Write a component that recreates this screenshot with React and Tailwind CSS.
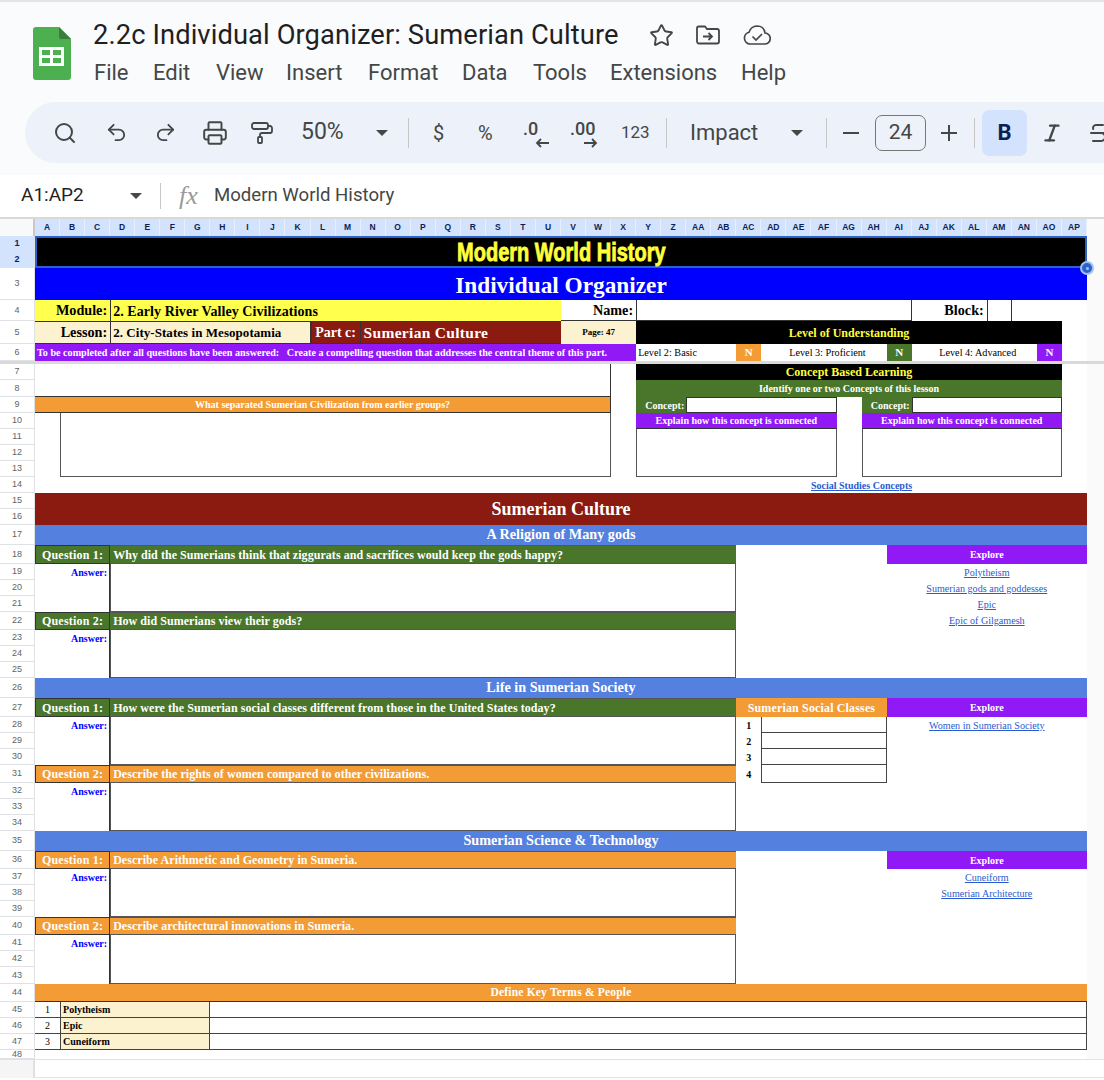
import { Italic, PaintRoller, Printer, Redo2, Search, Star, Strikethrough, Undo2 } from "lucide-react";

const serif = "font-['Liberation_Serif',serif]";
const menu = [
  ["File", "w-[59px]"],
  ["Edit", "w-[63px]"],
  ["View", "w-[70px]"],
  ["Insert", "w-[82px]"],
  ["Format", "w-[94px]"],
  ["Data", "w-[71px]"],
  ["Tools", "w-[77px]"],
  ["Extensions", "w-[131px]"],
  ["Help", "w-[60px]"],
];
const columns = "A B C D E F G H I J K L M N O P Q R S T U V W X Y Z AA AB AC AD AE AF AG AH AI AJ AK AL AM AN AO AP".split(" ");
const frozenRows = [16, 16, 32, 21, 23, 17];
const bodyRows = [16, 17, 16, 16, 16, 16, 16, 16, 16, 16, 20, 19, 16, 16, 16, 18, 16, 16, 16, 20, 19, 16, 16, 16, 18, 16, 16, 16, 20, 18, 16, 16, 16, 18, 16, 16, 17, 18, 16, 16, 16, 9];

function SheetsLogo() {
  return (
    <svg width="38" height="53" viewBox="0 0 38 53" className="mt-[6px] shrink-0">
      <path d="M3 0H26L38 12V50a3 3 0 0 1-3 3H3a3 3 0 0 1-3-3V3a3 3 0 0 1 3-3z" fill="#4caf50" />
      <path d="M26 0L38 12H28a2 2 0 0 1-2-2z" fill="#3b7d3e" />
      <path d="M6 20H31V39H6zM9 23V28H17V23zM20 23V28H28V23zM9 31V36H17V31zM20 31V36H28V31z" fill="#fff" fillRule="evenodd" />
    </svg>
  );
}

function FolderMove() {
  return (
    <svg width="24" height="20" viewBox="0 0 24 20" fill="none" stroke="#444746" strokeWidth="1.8">
      <path d="M1 3a1.500 1.500 0 0 1 1.500-1.500H9l2 2.500h10a2 2 0 0 1 2 2v10.500a2 2 0 0 1-2 2H3a2 2 0 0 1-2-2z" />
      <path d="M7 11.500h9M12.500 8l3.500 3.500-3.500 3.500" />
    </svg>
  );
}

function CloudDone() {
  return (
    <svg width="28" height="20" viewBox="0 0 28 20" fill="none" stroke="#444746" strokeWidth="1.7">
      <path d="M7 19a6 6 0 0 1-1-11.800A9 9 0 0 1 14 1c4.500 0 7.500 3 8 7a5.500 5.500 0 0 1-.5 11z" />
      <path d="M9.500 11.500l3.500 3.500 6-6" />
    </svg>
  );
}

function Caret({ className }) {
  return <span className={`h-0 w-0 border-x-[6px] border-t-[6px] border-x-transparent border-t-[#444746] ${className}`} />;
}

function Sep({ className }) {
  return <span className={`h-[30px] w-px shrink-0 bg-[#c7c7c7] ${className}`} />;
}

function DecimalIcon({ label, reverse, className }) {
  return (
    <span className={`relative h-[30px] shrink-0 text-[#444746] ${className}`}>
      <span className="absolute left-0 top-[-1px] text-[18px] font-medium leading-[24px]">{label}</span>
      <svg width="14" height="10" viewBox="0 0 14 10" className={`absolute bottom-0 right-0 ${reverse ? "rotate-180" : ""}`} fill="none" stroke="#444746" strokeWidth="1.800">
        <path d="M14 5H2M6 1L2 5l4 4" />
      </svg>
    </span>
  );
}

function Chrome() {
  return (
    <div className="h-[173px] shrink-0 bg-[#f9fbfd] font-['Roboto',sans-serif]">
      <div className="flex h-[66px] pl-[33px] pt-[19px]">
        <SheetsLogo />
        <div className="ml-[22px] min-w-0">
          <div className="flex h-[28px] items-center">
            <span className="text-[27.300px] leading-[28px] tracking-[0.1px] text-[#1f1f1f]">2.2c Individual Organizer: Sumerian Culture</span>
            <Star className="ml-[30px] shrink-0 text-[#444746]" size={25} strokeWidth={1.8} />
            <span className="ml-[22px]"><FolderMove /></span>
            <span className="ml-[23px]"><CloudDone /></span>
          </div>
          <div className="ml-px mt-[11px] flex h-[26px] items-center text-[22px] leading-[26px] text-[#444746]">
            {menu.map(([name, width]) => (
              <span key={name} className={`shrink-0 ${width}`}>{name}</span>
            ))}
          </div>
        </div>
      </div>
      <div className="ml-[25px] mt-[34px] flex h-[61px] items-center overflow-hidden rounded-l-full bg-[#edf2fa] text-[#444746]">
        <Search className="ml-[28px] shrink-0" size={24} strokeWidth={2} />
        <Undo2 className="ml-[28px] shrink-0" size={23} strokeWidth={1.9} />
        <Redo2 className="ml-[26px] shrink-0" size={23} strokeWidth={1.9} />
        <Printer className="ml-[25px] shrink-0" size={26} strokeWidth={1.8} />
        <PaintRoller className="ml-[22px] shrink-0" size={24} strokeWidth={1.8} />
        <span className="ml-[27px] w-[47px] shrink-0 text-[23px]">50%</span>
        <Caret className="ml-[28px] shrink-0" />
        <Sep className="ml-[20px]" />
        <span className="ml-[24px] w-[11px] shrink-0 text-[20px]">$</span>
        <span className="ml-[34px] w-[18px] shrink-0 text-[20px]">%</span>
        <DecimalIcon label=".0" className="ml-[27px] w-[26px]" />
        <DecimalIcon label=".00" reverse className="ml-[21px] w-[28px]" />
        <span className="ml-[23px] w-[28px] shrink-0 text-[17px]">123</span>
        <Sep className="ml-[17px]" />
        <span className="ml-[23px] w-[70px] shrink-0 text-[22px]">Impact</span>
        <Caret className="ml-[31px] shrink-0" />
        <Sep className="ml-[23px]" />
        <span className="ml-[16px] h-[2px] w-[16px] shrink-0 bg-[#444746]" />
        <span className="ml-[16px] flex h-[36px] w-[51px] shrink-0 items-center justify-center rounded-[7px] border border-[#747775] text-[21px]">24</span>
        <span className="relative ml-[15px] h-[16px] w-[16px] shrink-0">
          <span className="absolute left-0 top-[7px] h-[2px] w-[16px] bg-[#444746]" />
          <span className="absolute left-[7px] top-0 h-[16px] w-[2px] bg-[#444746]" />
        </span>
        <Sep className="ml-[17px]" />
        <span className="ml-[7px] flex h-[46px] w-[45px] shrink-0 items-center justify-center rounded-[7px] bg-[#d3e3fd] text-[22px] font-bold text-[#0b1f57]">B</span>
        <Italic className="ml-[14px] shrink-0" size={22} strokeWidth={2.600} />
        <Strikethrough className="ml-[24px] shrink-0" size={24} strokeWidth={2} />
      </div>
    </div>
  );
}

function FormulaBar() {
  return (
    <div className="flex h-[44px] shrink-0 items-center border-b-2 border-[#d9d9d9] bg-white pb-px font-['Roboto',sans-serif]">
      <span className="ml-[21px] w-[109px] text-[19px] text-[#1f1f1f]">A1:AP2</span>
      <Caret className="shrink-0" />
      <span className="ml-[18px] h-[26px] w-px bg-[#c7c7c7]" />
      <span className="ml-[18px] w-[35px] font-['Liberation_Serif',serif] text-[26px] italic leading-none text-[#9a9a9a]">fx</span>
      <span className="text-[18.600px] text-[#444746]">Modern World History</span>
    </div>
  );
}

function RowHeader({ rows, start, selected = [] }) {
  return (
    <div className="w-[35px] shrink-0 bg-white">
      {rows.map((height, i) => {
        const num = start + i;
        const active = selected.includes(num);
        return (
          <div
            key={num}
            style={{ height }}
            className={`flex items-center justify-center overflow-hidden border-b border-r border-[#dfe1e5] font-['Liberation_Sans',sans-serif] text-[9px] leading-none ${active ? "bg-[#d3e3fd] font-bold text-[#0b1f57]" : "text-[#5f6368]"}`}
          >
            {num}
          </div>
        );
      })}
    </div>
  );
}

function Question({ row, tone, label, text }) {
  return (
    <>
      <div className={`${row} col-[1/4] flex items-center justify-center border border-[#333] text-[12px] font-bold tracking-[0.2px] text-white ${tone}`}>{label}</div>
      <div className={`${row} col-[4/29] flex items-center border-y border-[#555] pl-[3px] text-[12px] font-bold tracking-[0.05px] text-white ${tone}`}>{text}</div>
    </>
  );
}

function Answer({ row }) {
  return (
    <>
      <div className={`${row} col-[1/4] border-r border-[#333] pr-[2px] text-right text-[10px] font-bold leading-[18px] text-[#0000ff]`}>Answer:</div>
      <div className={`${row} col-[4/29] border-x border-b border-[#555]`} />
    </>
  );
}

function Explore({ row }) {
  return <div className={`${row} col-[35/43] flex items-center justify-center bg-[#9019f5] text-[10px] font-bold text-white`}>Explore</div>;
}

function SheetLink({ row, children }) {
  return <div className={`${row} col-[35/43] text-center text-[10.100px] leading-[18px] text-[#2a5bd0] underline`}>{children}</div>;
}

function Band({ row, className = "bg-[#5480e0] text-[14.200px]", children }) {
  return <div className={`${row} col-[1/43] flex items-center justify-center font-bold text-white ${className}`}>{children}</div>;
}

function FrozenGrid() {
  return (
    <div className={`relative grid w-[1052px] shrink-0 grid-cols-[repeat(42,25.048px)] grid-rows-[16px_16px_32px_21px_23px_17px] bg-white ${serif} text-black`}>
      <div className="col-[1/43] row-[1/3] flex items-center justify-center border-2 border-[#2d62c8] bg-black font-['Liberation_Sans',sans-serif] text-[25px] font-bold leading-none text-[#ffff3a]">
        <span className="inline-block scale-x-[0.8] whitespace-nowrap [-webkit-text-stroke:0.8px_#ffff3a]">Modern World History</span>
      </div>
      <div className="col-[1/43] row-[3] flex items-center justify-center bg-[#0000ff] pt-[2px] text-[23.300px] font-bold text-white">Individual Organizer</div>

      <div className="col-[1/4] row-[4] flex items-center justify-end bg-[#ffff4d] pr-[3px] pt-px text-[14.200px] font-bold">Module:</div>
      <div className="col-[4/22] row-[4] flex items-center border-l border-[#333] bg-[#ffff4d] pl-[2px] pt-px text-[14px] font-bold tracking-[0.07px]">2. Early River Valley Civilizations</div>
      <div className="col-[22/25] row-[4] flex items-center justify-end border-b border-[#333] pr-[3px] pt-px text-[14.200px] font-bold">Name:</div>
      <div className="col-[25/36] row-[4] border-x border-b border-[#333]" />
      <div className="col-[36/39] row-[4] flex items-center justify-end pr-[3px] pt-px text-[14.200px] font-bold">Block:</div>
      <div className="col-[39] row-[4] border-x border-[#333]" />

      <div className="col-[1/4] row-[5] flex items-center justify-end border-y border-[#333] bg-[#fdf2d0] pr-[3px] text-[14.200px] font-bold">Lesson:</div>
      <div className="col-[4/12] row-[5] flex items-center border border-[#333] bg-[#fdf2d0] pl-[2px] text-[13px] font-bold tracking-[0.05px]">2. City-States in Mesopotamia</div>
      <div className="col-[12/14] row-[5] flex items-center justify-center border border-[#333] bg-[#8b1a10] text-[14px] font-bold text-white">Part c:</div>
      <div className="col-[14/22] row-[5] flex items-center border-y border-[#333] bg-[#8b1a10] pl-[3px] text-[15.500px] font-bold tracking-[0.3px] text-white">Sumerian Culture</div>
      <div className="col-[22/25] row-[5] flex items-center justify-center bg-[#fdf2d0] text-[9px] font-bold">Page: 47</div>
      <div className="col-[25/42] row-[5] flex items-center justify-center bg-black text-[12px] font-bold text-[#ffff3a]">Level of Understanding</div>

      <div className="col-[1/25] row-[6] flex items-center whitespace-pre bg-[#9019f5] pl-[2px] text-[10.150px] font-bold text-white">To be completed after all questions have been answered:   Create a compelling question that addresses the central theme of this part.</div>
      <div className="col-[25/29] row-[6] flex items-center pl-[2px] text-[10.200px]">Level 2: Basic</div>
      <div className="col-[29] row-[6] flex items-center justify-center bg-[#f39c35] text-[11px] font-bold text-white">N</div>
      <div className="col-[30/35] row-[6] flex items-center justify-center pl-[7px] text-[10.200px]">Level 3: Proficient</div>
      <div className="col-[35] row-[6] flex items-center justify-center bg-[#4a762c] text-[11px] font-bold text-white">N</div>
      <div className="col-[36/41] row-[6] flex items-center justify-center pl-[7px] text-[10.200px]">Level 4: Advanced</div>
      <div className="col-[41] row-[6] flex items-center justify-center bg-[#9019f5] text-[11px] font-bold text-white">N</div>

      <span className="absolute left-[1045px] top-[25px] z-10 flex h-[14px] w-[14px] items-center justify-center rounded-full border-2 border-[#9fc0f5] bg-[#2d62c8]">
        <span className="h-[3px] w-[3px] rounded-full bg-[#9fc0f5]" />
      </span>
    </div>
  );
}

function BodyGrid() {
  return (
    <div className={`grid w-[1052px] shrink-0 grid-cols-[repeat(42,25.048px)] grid-rows-[16px_17px_16px_16px_16px_16px_16px_16px_16px_16px_20px_19px_16px_16px_16px_18px_16px_16px_16px_20px_19px_16px_16px_16px_18px_16px_16px_16px_20px_18px_16px_16px_16px_18px_16px_16px_17px_18px_16px_16px_16px_9px] bg-white ${serif} text-black`}>
      {/* rows 7-14 */}
      <div className="col-[1/24] row-[1/3] border-b border-r border-[#333]" />
      <div className="col-[1/24] row-[3] flex items-center justify-center border-b border-r border-[#333] bg-[#f39c35] text-[10px] font-bold text-white">What separated Sumerian Civilization from earlier groups?</div>
      <div className="col-[2/24] row-[4/8] border-x border-b border-[#555]" />

      <div className="col-[25/42] row-[1] flex items-center justify-center bg-black text-[12px] font-bold text-[#ffff3a]">Concept Based Learning</div>
      <div className="col-[25/42] row-[2] flex items-center justify-center bg-[#4a762c] text-[10px] font-bold text-white">Identify one or two Concepts of this lesson</div>
      <div className="col-[25/27] row-[3] flex items-center justify-end bg-[#4a762c] pr-[2px] text-[10px] font-bold text-white">Concept:</div>
      <div className="col-[27/33] row-[3] border border-[#333]" />
      <div className="col-[34/36] row-[3] flex items-center justify-end bg-[#4a762c] pr-[2px] text-[10px] font-bold text-white">Concept:</div>
      <div className="col-[36/42] row-[3] border border-[#333]" />
      <div className="col-[25/33] row-[4] flex items-center justify-center border-b border-[#333] bg-[#9019f5] text-[10px] font-bold text-white">Explain how this concept is connected</div>
      <div className="col-[34/42] row-[4] flex items-center justify-center border-b border-[#333] bg-[#9019f5] text-[10px] font-bold text-white">Explain how this concept is connected</div>
      <div className="col-[25/33] row-[5/8] border-x border-b border-[#555]" />
      <div className="col-[34/42] row-[5/8] border-x border-b border-[#555]" />
      <div className="col-[30/38] row-[8] text-center text-[10px] font-bold leading-[18px] text-[#2a5bd0] underline">Social Studies Concepts</div>

      {/* A Religion of Many gods */}
      <Band row="row-[9/11]" className="bg-[#8b1a10] pt-px text-[18px]">Sumerian Culture</Band>
      <Band row="row-[11]">A Religion of Many gods</Band>
      <Question row="row-[12]" tone="bg-[#4a762c]" label="Question 1:" text="Why did the Sumerians think that ziggurats and sacrifices would keep the gods happy?" />
      <Explore row="row-[12]" />
      <Answer row="row-[13/16]" />
      <SheetLink row="row-[13]">Polytheism</SheetLink>
      <SheetLink row="row-[14]">Sumerian gods and goddesses</SheetLink>
      <SheetLink row="row-[15]">Epic</SheetLink>
      <SheetLink row="row-[16]">Epic of Gilgamesh</SheetLink>
      <Question row="row-[16]" tone="bg-[#4a762c]" label="Question 2:" text="How did Sumerians view their gods?" />
      <Answer row="row-[17/20]" />

      {/* Life in Sumerian Society */}
      <Band row="row-[20]">Life in Sumerian Society</Band>
      <Question row="row-[21]" tone="bg-[#4a762c]" label="Question 1:" text="How were the Sumerian social classes different from those in the United States today?" />
      <div className="col-[29/35] row-[21] flex items-center justify-center bg-[#f39c35] text-[12px] font-bold tracking-[0.15px] text-white">Sumerian Social Classes</div>
      <Explore row="row-[21]" />
      <Answer row="row-[22/25]" />
      <SheetLink row="row-[22]">Women in Sumerian Society</SheetLink>
      {["1", "2", "3", "4"].map((n, i) => (
        <div key={n} className={`col-[29] flex items-center justify-center text-[10px] font-bold ${["row-[22]", "row-[23]", "row-[24]", "row-[25]"][i]}`}>{n}</div>
      ))}
      <div className="col-[30/35] row-[22] border-x border-b border-[#444]" />
      <div className="col-[30/35] row-[23] border-x border-b border-[#444]" />
      <div className="col-[30/35] row-[24] border-x border-b border-[#444]" />
      <div className="col-[30/35] row-[25] border-x border-b border-[#444]" />
      <Question row="row-[25]" tone="bg-[#f39c35]" label="Question 2:" text="Describe the rights of women compared to other civilizations." />
      <Answer row="row-[26/29]" />

      {/* Sumerian Science & Technology */}
      <Band row="row-[29]">Sumerian Science &amp; Technology</Band>
      <Question row="row-[30]" tone="bg-[#f39c35]" label="Question 1:" text="Describe Arithmetic and Geometry in Sumeria." />
      <Explore row="row-[30]" />
      <Answer row="row-[31/34]" />
      <SheetLink row="row-[31]">Cuneiform</SheetLink>
      <SheetLink row="row-[32]">Sumerian Architecture</SheetLink>
      <Question row="row-[34]" tone="bg-[#f39c35]" label="Question 2:" text="Describe architectural innovations in Sumeria." />
      <Answer row="row-[35/38]" />

      {/* Key terms */}
      <Band row="row-[38]" className="border-b border-[#333] bg-[#f39c35] text-[11.500px] tracking-[0.2px]">Define Key Terms &amp; People</Band>
      {[
        ["1", "Polytheism", "row-[39]"],
        ["2", "Epic", "row-[40]"],
        ["3", "Cuneiform", "row-[41]"],
      ].map(([n, term, row]) => (
        <div key={n} className={`${row} col-[1/43] grid grid-cols-subgrid border-b border-r border-[#444]`}>
          <div className="col-[1] flex items-center justify-center text-[10px]">{n}</div>
          <div className="col-[2/8] flex items-center border-x border-[#444] bg-[#fdf2d0] pl-[2px] text-[10px] font-bold">{term}</div>
        </div>
      ))}
    </div>
  );
}

export default function App() {
  return (
    <div className="flex h-[1080px] w-[1104px] flex-col overflow-hidden bg-white">
      <div className="h-[2px] shrink-0 bg-[#e4e4e4]" />
      <Chrome />
      <FormulaBar />
      <div className="flex h-[17px] shrink-0 bg-[#fafafa] font-['Liberation_Sans',sans-serif]">
        <div className="w-[35px] shrink-0 border-r-2 border-[#c9c9c9] bg-[#f8f9fa]" />
        <div className="grid w-[1052px] shrink-0 grid-cols-[repeat(42,25.048px)] bg-[#d3e3fd]">
          {columns.map((col) => (
            <div key={col} className="flex items-center justify-center border-r border-[#e8effb] text-[8.500px] font-bold leading-none text-[#0b1f57]">{col}</div>
          ))}
        </div>
      </div>
      <div className="flex shrink-0 bg-[#fafafa]">
        <RowHeader rows={frozenRows} start={1} selected={[1, 2]} />
        <FrozenGrid />
      </div>
      <div className="h-[3px] shrink-0 bg-[#d9d9d9]" />
      <div className="flex shrink-0 bg-[#fafafa]">
        <RowHeader rows={bodyRows} start={7} />
        <BodyGrid />
      </div>
      <div className="flex h-[19px] shrink-0 border-t border-[#dfe1e5] bg-[#fafafa]">
        <div className="w-[35px] shrink-0 border-r-2 border-[#e0e0e0] bg-[#f5f5f5]" />
        <div className="flex-1 border-b border-[#e4e4e4] bg-white" />
      </div>
    </div>
  );
}
